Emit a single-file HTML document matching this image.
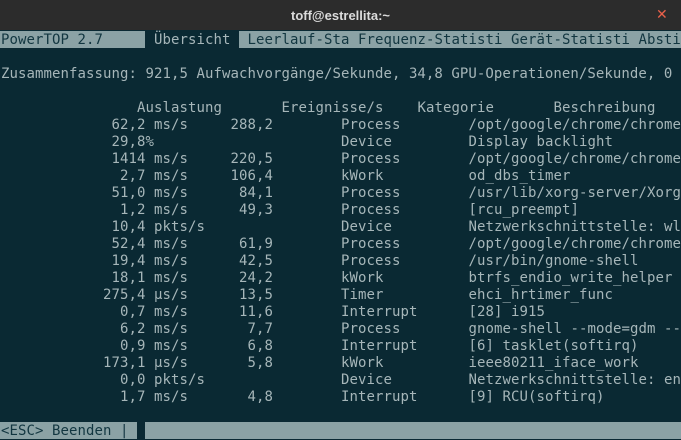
<!DOCTYPE html>
<html><head><meta charset="utf-8"><style>
html,body{margin:0;padding:0;width:681px;height:440px;overflow:hidden;background:#0a2933;}
.tb{position:absolute;left:0;top:0;width:681px;height:30px;background:#2c2c2c;}
.tt{position:absolute;left:0;top:0;width:681px;height:30px;line-height:31px;text-align:center;font-family:"Liberation Sans","DejaVu Sans",sans-serif;font-weight:bold;font-size:13px;color:#dcdcdc;}
.x{position:absolute;left:656px;top:7px;color:#e8604a;font-family:"DejaVu Sans",sans-serif;font-weight:bold;font-size:14px;}
.r{position:absolute;left:0;width:681px;height:17px;font-family:"DejaVu Sans Mono","Liberation Mono",monospace;font-size:14px;letter-spacing:0.07px;line-height:17px;color:#a6b6b9;white-space:pre;margin-top:1px;}
.r span{position:absolute;top:0;}
.hl{position:absolute;height:17px;background:#8ba2a5;}
.dk{color:#123640;}
.a{left:1px;width:144.5px;text-align:right;}
.u{left:154px;}
.e{left:1px;width:272px;text-align:right;}
.k{left:341px;}
.d{left:468.5px;}
</style></head><body>
<div class="tb"></div>
<div class="tt">toff@estrellita:~</div>
<div class="x">✕</div>

<div class="hl" style="left:0;top:31px;width:145px"></div>
<div class="hl" style="left:239px;top:31px;width:442px"></div>
<div class="r" style="top:31px"><span class="dk" style="left:1px">PowerTOP 2.7</span><span style="left:154px">Übersicht</span><span class="dk" style="left:247.5px">Leerlauf-Sta Frequenz-Statisti Gerät-Statisti Absti</span></div>

<div class="r" style="top:65px"><span style="left:1px">Zusammenfassung: 921,5 Aufwachvorgänge/Sekunde, 34,8 GPU-Operationen/Sekunde, 0</span></div>

<div class="r" style="top:99px"><span style="left:137px">Auslastung</span><span style="left:281.5px">Ereignisse/s</span><span style="left:417.5px">Kategorie</span><span style="left:553.5px">Beschreibung</span></div>

<div class="r" style="top:116px"><span class="a">62,2</span><span class="u">ms/s</span><span class="e">288,2</span><span class="k">Process</span><span class="d">/opt/google/chrome/chrome</span></div>
<div class="r" style="top:133px"><span style="left:111.5px">29,8%</span><span class="k">Device</span><span class="d">Display backlight</span></div>
<div class="r" style="top:150px"><span class="a">1414</span><span class="u">ms/s</span><span class="e">220,5</span><span class="k">Process</span><span class="d">/opt/google/chrome/chrome</span></div>
<div class="r" style="top:167px"><span class="a">2,7</span><span class="u">ms/s</span><span class="e">106,4</span><span class="k">kWork</span><span class="d">od_dbs_timer</span></div>
<div class="r" style="top:184px"><span class="a">51,0</span><span class="u">ms/s</span><span class="e">84,1</span><span class="k">Process</span><span class="d">/usr/lib/xorg-server/Xorg</span></div>
<div class="r" style="top:201px"><span class="a">1,2</span><span class="u">ms/s</span><span class="e">49,3</span><span class="k">Process</span><span class="d">[rcu_preempt]</span></div>
<div class="r" style="top:218px"><span class="a">10,4</span><span class="u">pkts/s</span><span class="k">Device</span><span class="d">Netzwerkschnittstelle: wl</span></div>
<div class="r" style="top:235px"><span class="a">52,4</span><span class="u">ms/s</span><span class="e">61,9</span><span class="k">Process</span><span class="d">/opt/google/chrome/chrome</span></div>
<div class="r" style="top:252px"><span class="a">19,4</span><span class="u">ms/s</span><span class="e">42,5</span><span class="k">Process</span><span class="d">/usr/bin/gnome-shell</span></div>
<div class="r" style="top:269px"><span class="a">18,1</span><span class="u">ms/s</span><span class="e">24,2</span><span class="k">kWork</span><span class="d">btrfs_endio_write_helper</span></div>
<div class="r" style="top:286px"><span class="a">275,4</span><span class="u">µs/s</span><span class="e">13,5</span><span class="k">Timer</span><span class="d">ehci_hrtimer_func</span></div>
<div class="r" style="top:303px"><span class="a">0,7</span><span class="u">ms/s</span><span class="e">11,6</span><span class="k">Interrupt</span><span class="d">[28] i915</span></div>
<div class="r" style="top:320px"><span class="a">6,2</span><span class="u">ms/s</span><span class="e">7,7</span><span class="k">Process</span><span class="d">gnome-shell --mode=gdm --</span></div>
<div class="r" style="top:337px"><span class="a">0,9</span><span class="u">ms/s</span><span class="e">6,8</span><span class="k">Interrupt</span><span class="d">[6] tasklet(softirq)</span></div>
<div class="r" style="top:354px"><span class="a">173,1</span><span class="u">µs/s</span><span class="e">5,8</span><span class="k">kWork</span><span class="d">ieee80211_iface_work</span></div>
<div class="r" style="top:371px"><span class="a">0,0</span><span class="u">pkts/s</span><span class="k">Device</span><span class="d">Netzwerkschnittstelle: en</span></div>
<div class="r" style="top:388px"><span class="a">1,7</span><span class="u">ms/s</span><span class="e">4,8</span><span class="k">Interrupt</span><span class="d">[9] RCU(softirq)</span></div>

<div class="hl" style="left:0;top:422px;width:137px"></div>
<div class="hl" style="left:145px;top:422px;width:536px"></div>
<div class="r" style="top:422px"><span class="dk" style="left:1px">&lt;ESC&gt; Beenden |</span></div>
</body></html>
